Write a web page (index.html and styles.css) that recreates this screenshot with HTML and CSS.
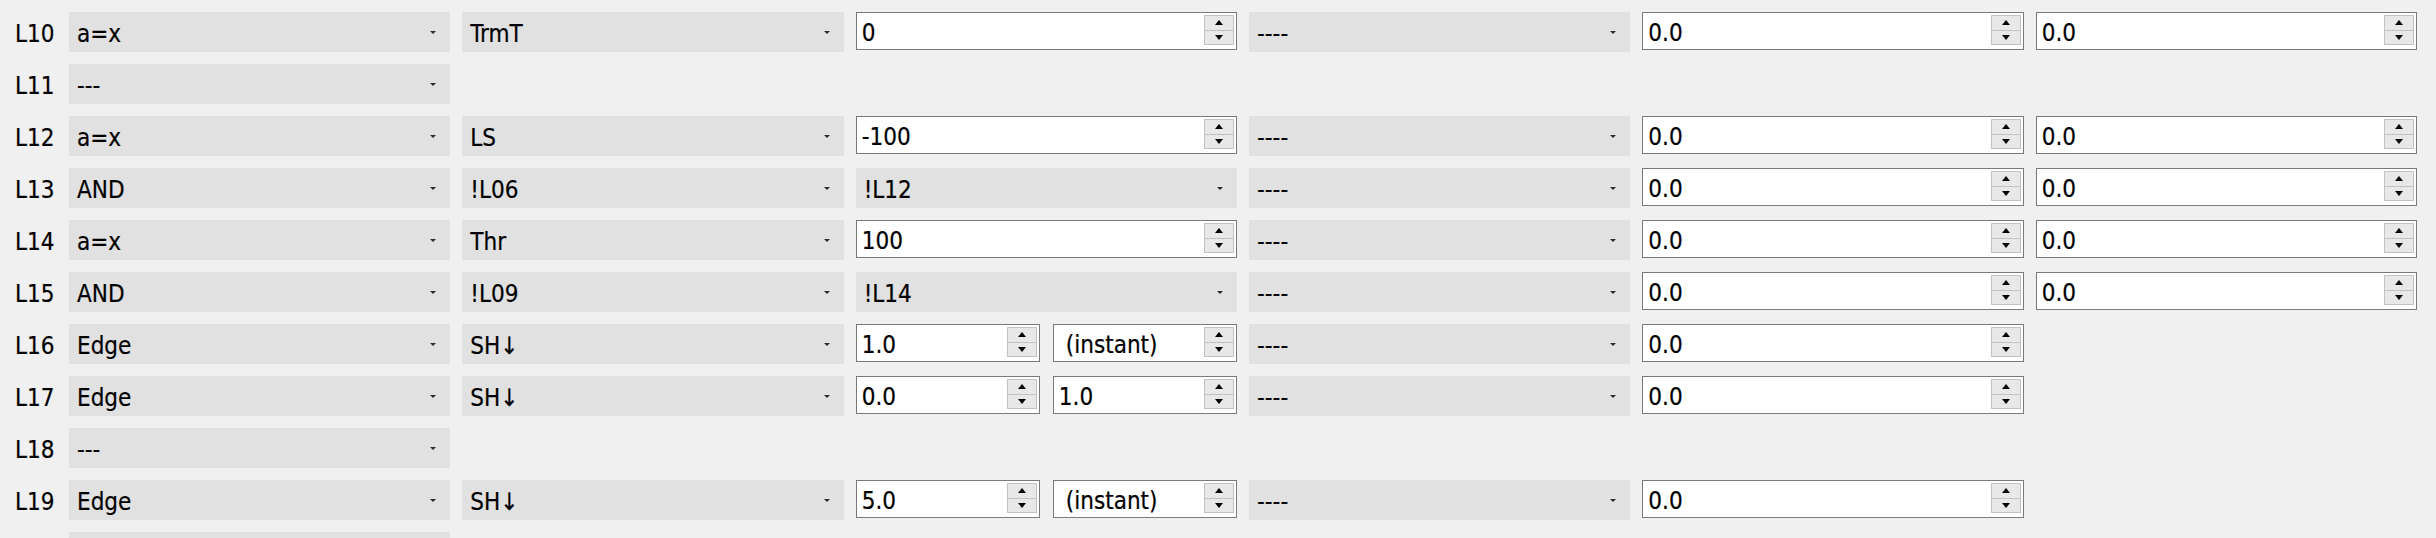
FILE: index.html
```html
<!DOCTYPE html>
<html>
<head>
<meta charset="utf-8">
<link rel="stylesheet" href="styles.css">
</head>
<body>
<div class="sheet">
  <div class="row">
    <div class="lbl">L10</div>
    <div class="combo">a=x</div>
    <div class="combo">TrmT</div>
    <div class="spin"><span class="val">0</span><span class="btns"><span class="btn"><i class="up"></i></span><span class="btn"><i class="dn"></i></span></span></div>
    <div class="combo">----</div>
    <div class="spin"><span class="val">0.0</span><span class="btns"><span class="btn"><i class="up"></i></span><span class="btn"><i class="dn"></i></span></span></div>
    <div class="spin"><span class="val">0.0</span><span class="btns"><span class="btn"><i class="up"></i></span><span class="btn"><i class="dn"></i></span></span></div>
  </div>
  <div class="row">
    <div class="lbl">L11</div>
    <div class="combo">---</div>
  </div>
  <div class="row">
    <div class="lbl">L12</div>
    <div class="combo">a=x</div>
    <div class="combo">LS</div>
    <div class="spin"><span class="val">-100</span><span class="btns"><span class="btn"><i class="up"></i></span><span class="btn"><i class="dn"></i></span></span></div>
    <div class="combo">----</div>
    <div class="spin"><span class="val">0.0</span><span class="btns"><span class="btn"><i class="up"></i></span><span class="btn"><i class="dn"></i></span></span></div>
    <div class="spin"><span class="val">0.0</span><span class="btns"><span class="btn"><i class="up"></i></span><span class="btn"><i class="dn"></i></span></span></div>
  </div>
  <div class="row">
    <div class="lbl">L13</div>
    <div class="combo">AND</div>
    <div class="combo">!L06</div>
    <div class="combo">!L12</div>
    <div class="combo">----</div>
    <div class="spin"><span class="val">0.0</span><span class="btns"><span class="btn"><i class="up"></i></span><span class="btn"><i class="dn"></i></span></span></div>
    <div class="spin"><span class="val">0.0</span><span class="btns"><span class="btn"><i class="up"></i></span><span class="btn"><i class="dn"></i></span></span></div>
  </div>
  <div class="row">
    <div class="lbl">L14</div>
    <div class="combo">a=x</div>
    <div class="combo">Thr</div>
    <div class="spin"><span class="val">100</span><span class="btns"><span class="btn"><i class="up"></i></span><span class="btn"><i class="dn"></i></span></span></div>
    <div class="combo">----</div>
    <div class="spin"><span class="val">0.0</span><span class="btns"><span class="btn"><i class="up"></i></span><span class="btn"><i class="dn"></i></span></span></div>
    <div class="spin"><span class="val">0.0</span><span class="btns"><span class="btn"><i class="up"></i></span><span class="btn"><i class="dn"></i></span></span></div>
  </div>
  <div class="row">
    <div class="lbl">L15</div>
    <div class="combo">AND</div>
    <div class="combo">!L09</div>
    <div class="combo">!L14</div>
    <div class="combo">----</div>
    <div class="spin"><span class="val">0.0</span><span class="btns"><span class="btn"><i class="up"></i></span><span class="btn"><i class="dn"></i></span></span></div>
    <div class="spin"><span class="val">0.0</span><span class="btns"><span class="btn"><i class="up"></i></span><span class="btn"><i class="dn"></i></span></span></div>
  </div>
  <div class="row">
    <div class="lbl">L16</div>
    <div class="combo">Edge</div>
    <div class="combo">SH↓</div>
    <div class="pair">
      <div class="spin"><span class="val">1.0</span><span class="btns"><span class="btn"><i class="up"></i></span><span class="btn"><i class="dn"></i></span></span></div>
      <div class="spin"><span class="val special">(instant)</span><span class="btns"><span class="btn"><i class="up"></i></span><span class="btn"><i class="dn"></i></span></span></div>
    </div>
    <div class="combo">----</div>
    <div class="spin"><span class="val">0.0</span><span class="btns"><span class="btn"><i class="up"></i></span><span class="btn"><i class="dn"></i></span></span></div>
  </div>
  <div class="row">
    <div class="lbl">L17</div>
    <div class="combo">Edge</div>
    <div class="combo">SH↓</div>
    <div class="pair">
      <div class="spin"><span class="val">0.0</span><span class="btns"><span class="btn"><i class="up"></i></span><span class="btn"><i class="dn"></i></span></span></div>
      <div class="spin"><span class="val">1.0</span><span class="btns"><span class="btn"><i class="up"></i></span><span class="btn"><i class="dn"></i></span></span></div>
    </div>
    <div class="combo">----</div>
    <div class="spin"><span class="val">0.0</span><span class="btns"><span class="btn"><i class="up"></i></span><span class="btn"><i class="dn"></i></span></span></div>
  </div>
  <div class="row">
    <div class="lbl">L18</div>
    <div class="combo">---</div>
  </div>
  <div class="row">
    <div class="lbl">L19</div>
    <div class="combo">Edge</div>
    <div class="combo">SH↓</div>
    <div class="pair">
      <div class="spin"><span class="val">5.0</span><span class="btns"><span class="btn"><i class="up"></i></span><span class="btn"><i class="dn"></i></span></span></div>
      <div class="spin"><span class="val special">(instant)</span><span class="btns"><span class="btn"><i class="up"></i></span><span class="btn"><i class="dn"></i></span></span></div>
    </div>
    <div class="combo">----</div>
    <div class="spin"><span class="val">0.0</span><span class="btns"><span class="btn"><i class="up"></i></span><span class="btn"><i class="dn"></i></span></span></div>
  </div>
  <div class="row">
    <div class="lbl"></div>
    <div class="combo"></div>
  </div>
</div>
</body>
</html>
```

FILE: styles.css
```css
html, body {
  margin: 0;
  padding: 0;
  background: #f0f0f0;
  overflow: hidden;
}
body {
  width: 2436px;
  height: 538px;
  font-family: "DejaVu Sans Condensed", "DejaVu Sans", sans-serif;
  font-stretch: condensed;
  font-size: 24px;
  color: #000;
  -webkit-text-stroke: 0.2px #000;
}
.sheet {
  display: flex;
  flex-direction: column;
  gap: 12px;
  padding: 12px 19px 0 15px;
}
.row {
  display: grid;
  grid-template-columns: 42px repeat(6, 1fr);
  column-gap: 12px;
  height: 40px;
  align-items: start;
}
.lbl {
  height: 40px;
  box-sizing: border-box;
  padding-top: 6px;
  line-height: 33px;
  white-space: nowrap;
}
.combo {
  height: 40px;
  box-sizing: border-box;
  background: #e1e1e1;
  padding: 6px 0 0 8px;
  line-height: 33px;
  display: flex;
  justify-content: space-between;
  white-space: nowrap;
  min-width: 0;
}
.combo::after {
  content: "";
  width: 0;
  height: 0;
  border-left: 3px solid transparent;
  border-right: 3px solid transparent;
  border-top: 3px solid #2a2a2a;
  margin: 13px 14px 0 0;
}
.spin {
  height: 38px;
  box-sizing: border-box;
  background: #fff;
  border: 1px solid #7a7a7a;
  display: flex;
  min-width: 0;
}
.val {
  flex: 1;
  padding: 4px 0 0 5px;
  line-height: 33px;
  white-space: nowrap;
  overflow: hidden;
}
.special {
  padding-left: 12px;
}
.btns {
  display: flex;
  flex-direction: column;
  width: 30px;
  height: 30px;
  margin: 2px 2px 0 0;
  box-sizing: border-box;
  border: 1px solid #c2c2c2;
  background: #e8e8e8;
}
.btn {
  flex: 1;
  display: flex;
  align-items: center;
  justify-content: center;
}
.btn + .btn {
  border-top: 1px solid #c2c2c2;
}
.up {
  width: 0;
  height: 0;
  border-left: 4px solid transparent;
  border-right: 4px solid transparent;
  border-bottom: 5px solid #000;
}
.dn {
  width: 0;
  height: 0;
  border-left: 4px solid transparent;
  border-right: 4px solid transparent;
  border-top: 5px solid #000;
}
.pair {
  display: grid;
  grid-template-columns: 1fr 1fr;
  column-gap: 13px;
  min-width: 0;
}
```
